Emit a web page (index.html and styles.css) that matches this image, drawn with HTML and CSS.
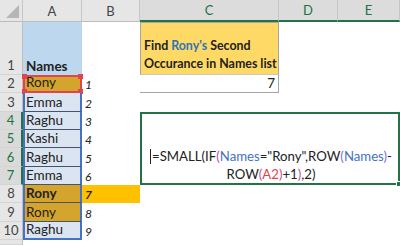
FILE: index.html
```html
<!DOCTYPE html>
<html lang="en">
<head>
  <meta charset="UTF-8">
  <title>Find second occurrence</title>
  <link rel="stylesheet" href="styles.css">
</head>
<body>
  <div class="sheet">
    <!-- column headers -->
    <div class="corner"><span class="tri"></span></div>
    <div class="ch">A</div>
    <div class="ch">B</div>
    <div class="ch sel">C</div>
    <div class="ch sel">D</div>
    <div class="ch sel">E</div>

    <!-- row 1 -->
    <div class="rh">1</div>
    <div class="cell a head">Names</div>
    <div class="cell"></div>
    <div class="cell title">
      <span>Find <span class="hl">Rony's</span> Second</span>
      <span>Occurance in Names list</span>
    </div>
    <div class="cell"></div>
    <div class="cell"></div>

    <!-- row 2 -->
    <div class="rh">2</div>
    <div class="cell a gold ref">Rony
      <i class="knob tl"></i><i class="knob tr"></i><i class="knob bl"></i><i class="knob br"></i>
    </div>
    <div class="cell b">1</div>
    <div class="cell result">7</div>
    <div class="cell"></div>
    <div class="cell"></div>

    <!-- row 3 -->
    <div class="rh">3</div>
    <div class="cell a rng">Emma</div>
    <div class="cell b">2</div>
    <div class="cell"></div>
    <div class="cell"></div>
    <div class="cell"></div>

    <!-- row 4, with the merged formula cell C4:E7 -->
    <div class="rh sel">4</div>
    <div class="cell a rng">Raghu</div>
    <div class="cell b">3</div>
    <div class="cell formula">
      <div class="ftext"><span class="caret"></span>=SMALL(IF<span class="p2">(</span><span class="ref1">Names</span>="Rony",ROW<span class="p3">(</span><span class="ref1">Names</span><span class="p3">)</span>-<br>ROW<span class="p4">(</span><span class="ref2">A2</span><span class="p4">)</span>+1<span class="p2">)</span>,2)</div>
      <i class="fill-handle"></i>
    </div>

    <div class="rh sel">5</div>
    <div class="cell a rng">Kashi</div>
    <div class="cell b">4</div>

    <div class="rh sel">6</div>
    <div class="cell a rng">Raghu</div>
    <div class="cell b">5</div>

    <div class="rh sel">7</div>
    <div class="cell a rng">Emma</div>
    <div class="cell b">6</div>

    <!-- row 8 -->
    <div class="rh">8</div>
    <div class="cell a gold rng strong">Rony</div>
    <div class="cell b hit">7</div>
    <div class="cell"></div>
    <div class="cell"></div>
    <div class="cell"></div>

    <!-- row 9 -->
    <div class="rh">9</div>
    <div class="cell a gold rng">Rony</div>
    <div class="cell b">8</div>
    <div class="cell"></div>
    <div class="cell"></div>
    <div class="cell"></div>

    <!-- row 10 -->
    <div class="rh">10</div>
    <div class="cell a rng last">Raghu</div>
    <div class="cell b">9</div>
    <div class="cell"></div>
    <div class="cell"></div>
    <div class="cell"></div>

    <!-- row 11 (cut off) -->
    <div class="rh"></div>
    <div class="cell"></div>
    <div class="cell"></div>
    <div class="cell"></div>
    <div class="cell"></div>
    <div class="cell"></div>
  </div>
</body>
</html>
```

FILE: styles.css
```css
* {
  margin: 0;
  padding: 0;
  box-sizing: border-box;
}
body {
  font-family: 'Lato', 'Liberation Sans', sans-serif;
  background: #fff;
  color: #222;
}
.sheet {
  display: grid;
  grid-template-columns: 23px 59px 58px 139px 59px 1fr;
  grid-template-rows: 22px 53px repeat(9, 18.33px) 1fr;
  width: 400px;
  height: 245px;
  overflow: hidden;
  font-size: 13px;
}

/* headers */
.corner {
  background: #e6e6e6;
  border-right: 1px solid #c6c6c6;
  border-bottom: 1px solid #bdbdbd;
  position: relative;
}
.tri {
  position: absolute;
  right: 3px;
  bottom: 3px;
  width: 0;
  height: 0;
  border-left: 13px solid transparent;
  border-bottom: 13px solid #b6b6b6;
}
.ch {
  background: #e6e6e6;
  border-right: 1px solid #c6c6c6;
  border-bottom: 1px solid #bdbdbd;
  color: #444;
  display: flex;
  align-items: center;
  justify-content: center;
  font-size: 13px;
}
.ch.sel {
  background: #dcdcdc;
  color: #217346;
  border-bottom: 2px solid #217346;
}
.rh {
  background: #e6e6e6;
  border-right: 1px solid #bdbdbd;
  border-bottom: 1px solid #d4d4d4;
  color: #444;
  display: flex;
  align-items: flex-end;
  justify-content: center;
  font-size: 13px;
  line-height: 17px;
}
.rh.sel {
  background: #dadada;
  color: #217346;
  border-right: 2px solid #217346;
}

/* cells */
.cell {
  display: flex;
  align-items: flex-end;
  line-height: 17px;
  white-space: nowrap;
  position: relative;
}
.a {
  background: #dbe5f1;
  border-bottom: 1px solid #44546a;
  padding-left: 3px;
  font-size: 13.5px;
}
.a.head {
  background: #bdd7ee;
  font-weight: 700;
  border-bottom: none;
}
.a.gold {
  background: #d5a42c;
}
.a.strong {
  font-weight: 700;
}
.a.rng {
  border-left: 2px solid #4472c4;
  border-right: 2px solid #4472c4;
  padding-left: 1px;
}
.a.last {
  border-bottom: 2px solid #4472c4;
}
.a.ref {
  border: 2px solid #e0444f;
  padding-left: 1px;
}
.knob {
  position: absolute;
  width: 5px;
  height: 5px;
  background: #e0444f;
}
.knob.tl { left: -3px; top: -3px; }
.knob.tr { right: -3px; top: -3px; }
.knob.bl { left: -3px; bottom: -3px; }
.knob.br { right: -3px; bottom: -3px; }

.b {
  font-style: italic;
  font-size: 12px;
  padding-left: 3px;
}
.b.hit {
  background: #ffc000;
  font-weight: 700;
}

.title {
  background: #ffd966;
  border: 1px solid #a6a6a6;
  border-bottom-color: #c8c8c8;
  flex-direction: column;
  align-items: flex-start;
  justify-content: flex-end;
  padding: 0 0 1px 3px;
  font-weight: 700;
  font-size: 12.4px;
  line-height: 18px;
}
.title .hl {
  color: #2e75b6;
}
.result {
  justify-content: flex-end;
  padding-right: 3px;
  border-right: 1px solid #a6a6a6;
  border-bottom: 1px solid #a6a6a6;
  font-size: 13.5px;
}

.formula {
  grid-column: span 3;
  grid-row: span 4;
  border: 2px solid #217346;
  justify-content: center;
  padding: 0 0 0 2px;
}
.ftext {
  text-align: center;
  font-size: 13.2px;
  line-height: 18px;
  white-space: nowrap;
}
.caret {
  display: inline-block;
  width: 1px;
  height: 15px;
  background: #222;
  vertical-align: -3px;
  margin-right: 1px;
}
.ref1 { color: #4472c4; }
.ref2 { color: #e0444f; }
.p2 { color: #c2509a; }
.p3 { color: #7d6fd8; }
.p4 { color: #d0508a; }
.fill-handle {
  position: absolute;
  right: -4px;
  bottom: -4px;
  width: 6px;
  height: 6px;
  background: #217346;
  border: 1px solid #fff;
}
```
